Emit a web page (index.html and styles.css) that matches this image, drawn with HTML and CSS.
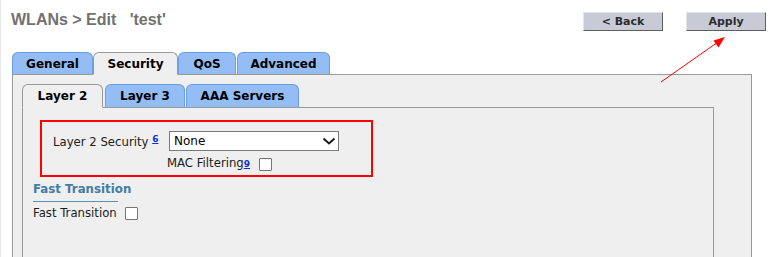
FILE: index.html
```html
<!DOCTYPE html>
<html lang="en">
<head>
<meta charset="utf-8">
<title>WLANs &gt; Edit 'test'</title>
<link rel="stylesheet" href="styles.css">
</head>
<body>
<div class="page">
  <header class="header">
    <h1 class="title">WLANs &gt; Edit&nbsp;&nbsp; 'test'</h1>
    <div class="actions">
      <button class="btn" type="button">&lt; Back</button>
      <button class="btn" type="button">Apply</button>
    </div>
  </header>

  <nav class="tabs tabs-outer">
    <span class="tab tab-general">General</span>
    <span class="tab tab-security active">Security</span>
    <span class="tab tab-qos">QoS</span>
    <span class="tab tab-advanced">Advanced</span>
  </nav>

  <div class="panel panel-outer">
    <nav class="tabs tabs-inner">
      <span class="tab tab-l2 active">Layer 2</span>
      <span class="tab tab-l3">Layer 3</span>
      <span class="tab tab-aaa">AAA Servers</span>
    </nav>

    <div class="panel panel-inner">
      <div class="l2box">
        <div class="row-sec">
          <span class="label">Layer 2 Security <a class="note sup" href="#">6</a></span>
          <span class="select-wrap">
            <select class="select"><option>None</option></select>
            <svg class="chev" width="14" height="8" viewBox="0 0 14 8"><path d="M1.5 1.5 L7 6.5 L12.5 1.5" fill="none" stroke="#1a1a1a" stroke-width="2"/></svg>
          </span>
        </div>
        <div class="row-mac">
          <span class="label">MAC Filtering<a class="note" href="#">9</a></span>
          <input class="cb" type="checkbox">
        </div>
      </div>

      <h2 class="section">Fast Transition</h2>
      <div class="rule"></div>
      <div class="row-ft">
        <span class="label">Fast Transition</span>
        <input class="cb" type="checkbox">
      </div>
    </div>
  </div>

  <svg class="arrow" width="769" height="257" viewBox="0 0 769 257">
    <line x1="661" y1="82" x2="718" y2="42" stroke="#f00" stroke-width="1"/>
    <polygon points="725,37 713.5,40.5 718.5,47.5" fill="#f00"/>
  </svg>
</div>
</body>
</html>
```
FILE: styles.css
```css
html, body {
  margin: 0;
  padding: 0;
  background: #fff;
}

.page {
  position: relative;
  height: 257px;
  overflow: hidden;
  border-left: 1px solid #e9e9e9;
  font-family: "DejaVu Sans", Verdana, sans-serif;
  color: #1c1c1c;
}

.header {
  display: flex;
  justify-content: space-between;
  align-items: flex-start;
  height: 52px;
  box-sizing: border-box;
  padding: 10px 3px 0 10px;
}

.title {
  margin: 0;
  font: bold 16px/20px "Liberation Sans", Arial, sans-serif;
  color: #717171;
}

.actions {
  display: flex;
  gap: 23px;
  margin-top: 2px;
}

.btn {
  width: 80px;
  height: 19px;
  box-sizing: border-box;
  padding: 0;
  background: #c8cbd6;
  border: 1px solid;
  border-color: #e4e4e4 #5e5e5e #5e5e5e #e4e4e4;
  font: bold 11px/17px "DejaVu Sans", Verdana, sans-serif;
  color: #2b2b2b;
}

.tabs {
  display: flex;
  align-items: flex-end;
  margin-bottom: -1px;
  position: relative;
  z-index: 1;
}

.tabs-outer {
  margin-left: 11px;
}

.tab {
  box-sizing: border-box;
  height: 23px;
  display: flex;
  align-items: center;
  justify-content: center;
  background: #93bdf4;
  border: 1px solid #6c9de0;
  border-bottom-color: #9a9a9a;
  border-radius: 6px 6px 0 0;
  font: bold 12px "DejaVu Sans", Verdana, sans-serif;
  color: #000;
}

.tab.active {
  background: #efefef;
  border-color: #9a9a9a;
  border-bottom-color: #efefef;
}

.tab-general { width: 81px; }
.tab-security { width: 85px; }
.tab-qos { width: 58px; }
.tab-advanced { width: 93px; margin-left: 1px; }

.tabs-inner .tab { height: 24px; }
.tab-l2 { width: 81px; }
.tab-l3 { width: 80px; margin-left: 2px; }
.tab-aaa { width: 113px; margin-left: 1px; }

.panel {
  box-sizing: border-box;
  background: #efefef;
  border: 1px solid #9a9a9a;
  border-bottom: none;
}

.panel-outer {
  margin-left: 11px;
  width: 740px;
  height: 200px;
  padding: 9px 37px 0 9px;
}

.panel-inner {
  height: 200px;
  padding: 12px 10px 0 10px;
}

.l2box {
  box-sizing: border-box;
  width: 333px;
  height: 57px;
  margin-left: 7px;
  border: 2px solid #f00;
  padding: 9px 0 5px 11px;
}

.label {
  font-size: 11.7px;
  line-height: 13px;
  white-space: nowrap;
}

.row-sec {
  display: grid;
  grid-template-columns: 116px 170px;
  align-items: center;
}

.note {
  color: #0a2fd0;
  font-weight: bold;
  font-size: 9px;
  text-decoration: underline;
}

.sup {
  vertical-align: 4px;
}

.select-wrap {
  position: relative;
  display: block;
  width: 170px;
  height: 20px;
}

.select {
  appearance: none;
  -webkit-appearance: none;
  display: block;
  box-sizing: border-box;
  width: 170px;
  height: 20px;
  margin: 0;
  padding: 0 0 0 4px;
  border: 1px solid #7a7a7a;
  border-radius: 0;
  background: #fff;
  font: 12px "DejaVu Sans", Verdana, sans-serif;
  color: #000;
}

.chev {
  position: absolute;
  right: 3px;
  top: 6px;
  pointer-events: none;
}

.row-mac {
  display: flex;
  align-items: center;
  gap: 9px;
  margin-top: 6px;
  padding-left: 114px;
}

.cb {
  appearance: none;
  -webkit-appearance: none;
  box-sizing: border-box;
  width: 13px;
  height: 13px;
  margin: 0;
  border: 1px solid #767676;
  border-radius: 1px;
  background: #fff;
}

.section {
  margin: 5px 0 0;
  font: bold 11.8px/14px "DejaVu Sans", Verdana, sans-serif;
  color: #437ca5;
}

.rule {
  width: 85px;
  height: 1px;
  margin-top: 5px;
  background: #5f8fb2;
}

.row-ft {
  display: flex;
  align-items: center;
  gap: 8px;
  margin-top: 5px;
}

.arrow {
  position: absolute;
  left: -1px;
  top: 0;
  pointer-events: none;
}
```
